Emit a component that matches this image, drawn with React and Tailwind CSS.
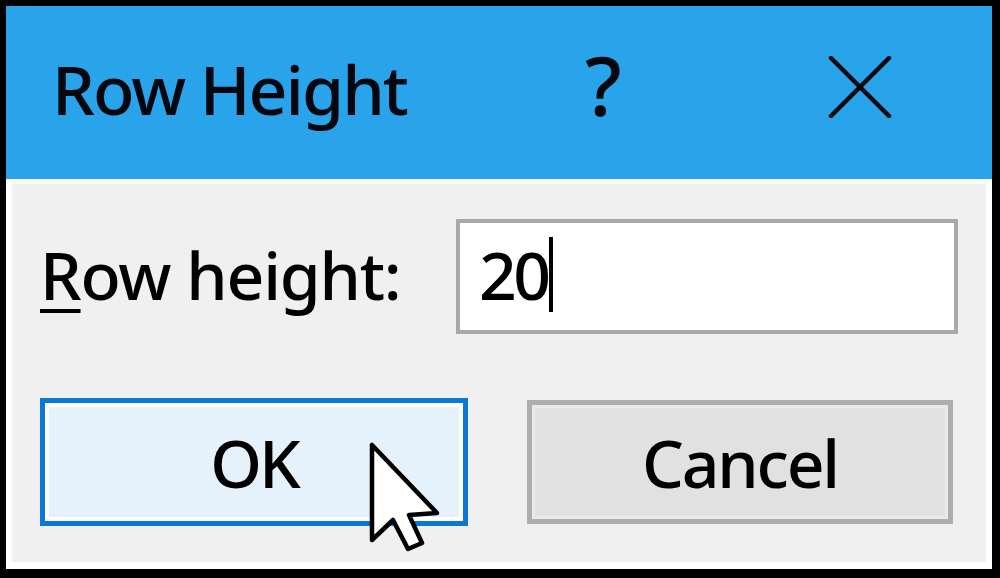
import React from "react";

export default function App() {
  const font = { fontFamily: '"Noto Sans", "Open Sans", sans-serif' };
  return (
    <div
      className="w-[1000px] h-[578px] bg-black pt-[6px] pl-[6px] pr-[8px] pb-[9px] flex flex-col relative overflow-hidden"
      style={font}
    >
      {/* Title bar */}
      <div className="h-[173px] shrink-0 bg-[#29a3ea] flex items-center">
        <div className="w-[579px] pl-[46px] text-[68px] leading-none font-medium text-[#05070f] pb-[8px] tracking-[-2px]">
          Row Height
        </div>
        <div className="text-[82px] leading-none font-medium text-[#05070f] pb-[18px]">?</div>
        <svg
          className="ml-[206px] mb-[12px]"
          width="64"
          height="62"
          viewBox="0 0 64 62"
        >
          <path
            d="M3 2 L61 60 M61 2 L3 60"
            stroke="#05070f"
            strokeWidth="4.5"
            strokeLinecap="round"
            fill="none"
          />
        </svg>
      </div>

      {/* Body */}
      <div className="flex-1 bg-[#f0f0f0] border-t-[5px] border-l-[6px] border-r-[6px] border-b-[7px] border-t-[#fdfaf6] border-l-white border-r-white border-b-white px-[28px] pt-[35px] flex flex-col">
        <div className="flex items-baseline justify-between">
          <div className="text-[66px] leading-[66px] font-medium text-black tracking-[-1.2px]">
            <span className="underline decoration-[4px] underline-offset-[9px]">R</span>ow height:
          </div>
          <div className="w-[502px] h-[115px] bg-white border-[4px] border-[#a8a8ad] pl-[19px] pt-[18px] text-[66px] leading-[66px] font-medium text-black">
            <span className="tracking-[-3.5px]">20</span>
            <span className="inline-block w-[4px] h-[75px] bg-black ml-[1px] -mt-[10px] align-[-12px]"></span>
          </div>
        </div>

        <div className="flex items-center mt-[64px]">
          <div className="w-[428px] h-[128px] border-[5px] border-[#0a78d6] bg-[#e5f1fb] shadow-[inset_0_0_0_4px_#ffffff] flex items-center justify-center text-[66px] leading-none font-medium text-black tracking-[-3px]">
            OK
          </div>
          <div className="ml-[59px] w-[426px] h-[124px] border-[5px] border-[#adadad] bg-[#e1e1e1] shadow-[inset_0_0_0_3px_#e9e9e9] flex items-center justify-center text-[66px] leading-none font-medium text-black tracking-[-2.2px]">
            Cancel
          </div>
        </div>
      </div>

      {/* Mouse pointer */}
      <svg
        className="absolute left-[368px] top-[441px]"
        width="74"
        height="114"
        viewBox="0 0 74 114"
      >
        <polygon
          points="4,4 4,99 25,79 40,108 54,102 41,74 69,72"
          fill="#ffffff"
          stroke="#000000"
          strokeWidth="4.5"
          strokeLinejoin="round"
        />
      </svg>
    </div>
  );
}
